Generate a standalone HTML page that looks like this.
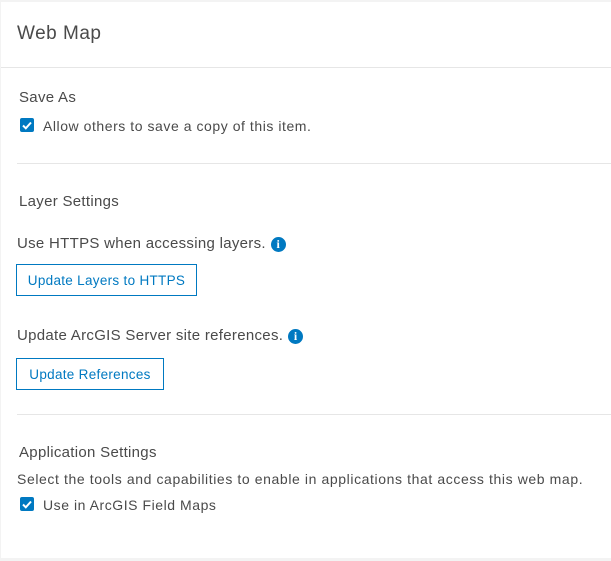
<!DOCTYPE html>
<html><head><style>
body{margin:0;width:611px;height:561px;background:#f3f3f3;font-family:"Liberation Sans",sans-serif;color:#4a4a4a;position:relative;overflow:hidden}
.card{position:absolute;left:1px;top:2px;width:610px;height:556px;background:#fff}
.t{position:absolute;white-space:nowrap}
.hr{position:absolute;left:0;right:0;height:1px;background:#e6e6e6}
.cb{position:absolute;width:14px;height:14px;background:#0079c1;border-radius:2px}
.btn{position:absolute;border:1px solid #0079c1;color:#0079c1;font-size:13.5px;box-sizing:border-box;display:flex;align-items:center;justify-content:center}
.i{display:inline-block;width:15px;height:15px;border-radius:50%;background:#0079c1;color:#fff;font-size:12px;font-weight:bold;text-align:center;line-height:15px;font-family:"Liberation Serif",serif;vertical-align:0px;margin-left:5px}
</style></head><body>
<div class="card">
<div class="t" style="left:16px;top:21px;font-size:19px;letter-spacing:0.5px">Web Map</div>
<div class="hr" style="top:65px"></div>
<div class="t" style="left:18px;top:87px;font-size:15px;letter-spacing:0.3px">Save As</div>
<div class="cb" style="left:19px;top:116px"><svg width="14" height="14"><path d="M3 7.5l2.8 2.8L11 4.5" stroke="#fff" stroke-width="2" fill="none"/></svg></div>
<div class="t" style="left:42px;top:116px;font-size:14px;letter-spacing:0.55px">Allow others to save a copy of this item.</div>
<div class="hr" style="top:161px;left:16px"></div>
<div class="t" style="left:18px;top:191px;font-size:15px;letter-spacing:0.3px">Layer Settings</div>
<div class="t" style="left:16px;top:233px;font-size:15px;letter-spacing:0.3px">Use HTTPS when accessing layers.<span class="i">i</span></div>
<div class="btn" style="left:15px;top:262px;width:181px;height:32px;letter-spacing:0.3px">Update Layers to HTTPS</div>
<div class="t" style="left:16px;top:325px;font-size:15px;letter-spacing:0.3px">Update ArcGIS Server site references.<span class="i">i</span></div>
<div class="btn" style="left:15px;top:356px;width:148px;height:32px;letter-spacing:0.3px">Update References</div>
<div class="hr" style="top:412px;left:16px"></div>
<div class="t" style="left:18px;top:442px;font-size:15px;letter-spacing:0.3px">Application Settings</div>
<div class="t" style="left:16px;top:469px;font-size:14px;letter-spacing:0.6px">Select the tools and capabilities to enable in applications that access this web map.</div>
<div class="cb" style="left:19px;top:495px"><svg width="14" height="14"><path d="M3 7.5l2.8 2.8L11 4.5" stroke="#fff" stroke-width="2" fill="none"/></svg></div>
<div class="t" style="left:42px;top:495px;font-size:14px;letter-spacing:0.55px">Use in ArcGIS Field Maps</div>
</div>
</body></html>
